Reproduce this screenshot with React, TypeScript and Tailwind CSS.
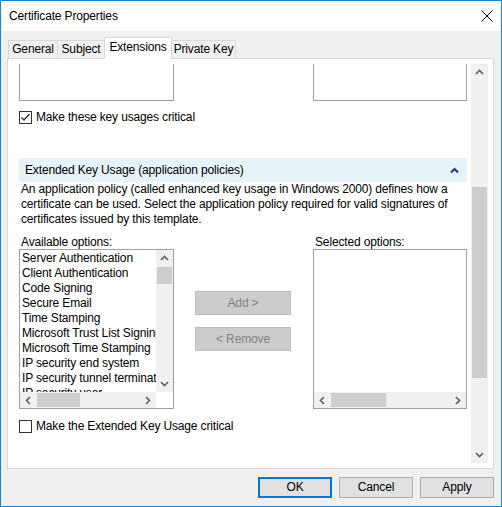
import React from "react";

const Chev = ({ dir, color = "#606060" }: { dir: "up" | "down" | "left" | "right"; color?: string }) => {
  const pts: Record<string, string> = {
    up: "1,6 4.5,2.5 8,6",
    down: "1,3 4.5,6.5 8,3",
    left: "6,1 2.5,4.5 6,8",
    right: "3,1 6.5,4.5 3,8",
  };
  return (
    <svg width="9" height="9" viewBox="0 0 9 9" className="block">
      <polyline points={pts[dir]} fill="none" stroke={color} strokeWidth="1.6" />
    </svg>
  );
};

const Checkbox = ({ checked }: { checked?: boolean }) => (
  <div className="w-[13px] h-[13px] border border-[#333333] bg-white flex items-center justify-center shrink-0">
    {checked && (
      <svg width="11" height="11" viewBox="0 0 11 11" className="block">
        <polyline points="1.5,5.5 4,8 9.5,2" fill="none" stroke="#333333" strokeWidth="1.3" />
      </svg>
    )}
  </div>
);

const items = [
  "Server Authentication",
  "Client Authentication",
  "Code Signing",
  "Secure Email",
  "Time Stamping",
  "Microsoft Trust List Signing",
  "Microsoft Time Stamping",
  "IP security end system",
  "IP security tunnel termination",
  "IP security user",
];

export default function App() {
  return (
    <div className="w-[502px] h-[507px] border border-[#1883d7] bg-[#f0f0f0] flex flex-col font-['Liberation_Sans',Arial,sans-serif] text-[12px] leading-[15px] tracking-[-0.15px] text-black overflow-hidden">
      {/* Title bar */}
      <div className="h-[30px] bg-white flex items-center justify-between pl-[8px] pr-[8px] shrink-0">
        <span className="pt-[1px] whitespace-nowrap">Certificate Properties</span>
        <svg width="12" height="12" viewBox="0 0 12 12" className="block">
          <line x1="0.5" y1="0.5" x2="11.5" y2="11.5" stroke="#000" strokeWidth="1" />
          <line x1="11.5" y1="0.5" x2="0.5" y2="11.5" stroke="#000" strokeWidth="1" />
        </svg>
      </div>

      <div className="flex flex-col pl-[6px] pr-[7px]">
        {/* Tabs */}
        <div className="mt-[6px] h-[22px] flex items-end pl-[1px] -mb-[1px] relative z-10 whitespace-nowrap">
          <div className="w-[50px] h-[18px] mb-[1px] border-l border-t border-r border-[#d9d9d9] bg-[#f0f0f0] flex items-center justify-center">
            General
          </div>
          <div className="w-[46px] h-[18px] mb-[1px] border-t border-[#d9d9d9] bg-[#f0f0f0] flex items-center justify-center">
            Subject
          </div>
          <div className="w-[68px] h-[22px] border-l border-t border-r border-[#d9d9d9] bg-white flex items-center justify-center pb-[3px]">
            Extensions
          </div>
          <div className="w-[64px] h-[18px] mb-[1px] border-t border-r border-[#d9d9d9] bg-[#f0f0f0] flex items-center justify-center">
            Private Key
          </div>
        </div>

        {/* Panel */}
        <div className="h-[411px] border border-[#d9d9d9] bg-white flex pt-[5px] pr-[5px] pl-[11px]">
          {/* scrolled content */}
          <div className="w-[448px] h-[399px] overflow-hidden flex flex-col whitespace-nowrap">
            <div className="h-[37px] flex shrink-0">
              <div className="w-[155px] h-full border-l border-r border-b border-[#a0a0a0] bg-white" />
              <div className="w-[154px] h-full border-l border-r border-b border-[#a0a0a0] bg-white ml-auto" />
            </div>

            <div className="mt-[9px] h-[14px] flex items-center gap-[4px] shrink-0">
              <Checkbox checked />
              <span>Make these key usages critical</span>
            </div>

            <div className="mt-[34px] h-[24px] bg-[#e5f3fb] flex items-center justify-between pl-[6px] pr-[8px] shrink-0">
              <span>Extended Key Usage (application policies)</span>
              <svg width="9" height="9" viewBox="0 0 9 9" className="block">
                <polyline points="1,6.5 4.5,3 8,6.5" fill="none" stroke="#1a3a8c" strokeWidth="2" />
              </svg>
            </div>

            <div className="pl-[2px] shrink-0">
              An application policy (called enhanced key usage in Windows 2000) defines how a
              <br />
              certificate can be used. Select the application policy required for valid signatures of
              <br />
              certificates issued by this template.
            </div>

            <div className="mt-[8px] h-[14px] flex shrink-0">
              <div className="w-[294px] pl-[2px] shrink-0">Available options:</div>
              <div className="pl-[2px]">Selected options:</div>
            </div>

            <div className="h-[160px] flex shrink-0">
              {/* Left listbox */}
              <div className="w-[155px] h-full border border-[#a0a0a0] bg-white flex flex-col">
                <div className="h-[142px] flex">
                  <div className="w-[136px] overflow-hidden pl-[2px] pt-[1px]">
                    {items.map((t) => (
                      <div key={t} className="h-[15px]">
                        {t}
                      </div>
                    ))}
                  </div>
                  <div className="w-[17px] h-full bg-[#f0f0f0] flex flex-col">
                    <div className="h-[17px] flex items-center justify-center">
                      <Chev dir="up" />
                    </div>
                    <div className="h-[17px] mx-[1px] bg-[#cdcdcd]" />
                    <div className="flex-1" />
                    <div className="h-[17px] flex items-center justify-center">
                      <Chev dir="down" />
                    </div>
                  </div>
                </div>
                <div className="h-[16px] flex">
                  <div className="w-[136px] h-full bg-[#f0f0f0] flex items-center">
                    <div className="w-[17px] h-full flex items-center justify-center">
                      <Chev dir="left" />
                    </div>
                    <div className="w-[43px] h-[14px] bg-[#cdcdcd]" />
                    <div className="flex-1" />
                    <div className="w-[17px] h-full flex items-center justify-center">
                      <Chev dir="right" />
                    </div>
                  </div>
                  <div className="flex-1 bg-white" />
                </div>
              </div>

              {/* Middle buttons */}
              <div className="ml-[21px] pt-[42px] flex flex-col gap-[12px]">
                <div className="w-[96px] h-[24px] bg-[#cccccc] border border-[#bfbfbf] text-[#838383] flex items-center justify-center">
                  Add &gt;
                </div>
                <div className="w-[96px] h-[24px] bg-[#cccccc] border border-[#bfbfbf] text-[#838383] flex items-center justify-center">
                  &lt; Remove
                </div>
              </div>

              {/* Right listbox */}
              <div className="w-[154px] h-full border border-[#a0a0a0] bg-white ml-auto flex flex-col">
                <div className="h-[142px]" />
                <div className="h-[16px] bg-[#f0f0f0] flex items-center">
                  <div className="w-[17px] h-full flex items-center justify-center">
                    <Chev dir="left" />
                  </div>
                  <div className="w-[55px] h-[14px] bg-[#cdcdcd]" />
                  <div className="flex-1" />
                  <div className="w-[17px] h-full flex items-center justify-center">
                    <Chev dir="right" />
                  </div>
                </div>
              </div>
            </div>

            <div className="mt-[10px] h-[14px] flex items-center gap-[4px] shrink-0">
              <Checkbox />
              <span>Make the Extended Key Usage critical</span>
            </div>
          </div>

          {/* Main scrollbar */}
          <div className="ml-auto w-[17px] h-[399px] bg-[#f0f0f0] flex flex-col">
            <div className="h-[17px] flex items-center justify-center">
              <Chev dir="up" />
            </div>
            <div className="mt-[106px] h-[191px] mx-[1px] bg-[#cdcdcd]" />
            <div className="flex-1" />
            <div className="h-[17px] flex items-center justify-center">
              <Chev dir="down" />
            </div>
          </div>
        </div>

        {/* Bottom buttons */}
        <div className="mt-[8px] flex justify-end gap-[7px] pr-[0px]">
          <div className="w-[74px] h-[21px] bg-[#e1e1e1] border-2 border-[#0078d7] flex items-center justify-center">
            OK
          </div>
          <div className="w-[74px] h-[21px] bg-[#e1e1e1] border border-[#adadad] flex items-center justify-center">
            Cancel
          </div>
          <div className="w-[74px] h-[21px] bg-[#e1e1e1] border border-[#adadad] flex items-center justify-center">
            Apply
          </div>
        </div>
      </div>
    </div>
  );
}
